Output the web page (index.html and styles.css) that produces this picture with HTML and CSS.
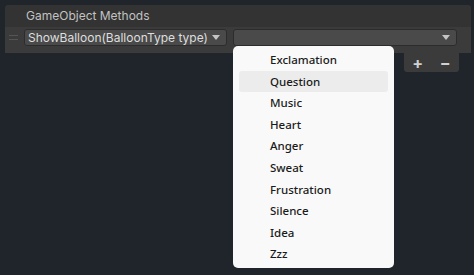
FILE: index.html
```html
<!DOCTYPE html>
<html lang="en">

<head>
    <meta charset="UTF-8" />
    <title>GameObject Methods</title>
    <link rel="stylesheet" href="styles.css">
</head>

<body>
    <div class="panel">
        <div class="panel-header">GameObject Methods</div>
        <div class="panel-row">
            <span class="handle"></span>
            <div class="field field-method">
                <span class="label">ShowBalloon(BalloonType type)</span>
                <span class="arrow"></span>
            </div>
            <div class="field field-value">
                <span class="label"></span>
                <span class="arrow"></span>
            </div>
        </div>
    </div>
    <div class="footer">
        <div class="footer-buttons">
            <span class="btn">+</span>
            <span class="btn">&minus;</span>
        </div>
    </div>

    <ul class="menu">
        <li>Exclamation</li>
        <li class="hover">Question</li>
        <li>Music</li>
        <li>Heart</li>
        <li>Anger</li>
        <li>Sweat</li>
        <li>Frustration</li>
        <li>Silence</li>
        <li>Idea</li>
        <li>Zzz</li>
    </ul>
</body>

</html>
```

FILE: styles.css
```css
html {
    box-sizing: border-box;
    height: 100%;
}

*,
*:before,
*:after {
    box-sizing: inherit;
}

body {
    margin: 0;
    height: 100%;
    background-color: #20242b;
    font-family: Inter, "Noto Sans", sans-serif;
    font-size: 12px;
    position: relative;
}

.panel {
    margin: 5px 3px 0 5px;
}

.panel-header {
    height: 22px;
    line-height: 22px;
    padding-left: 21px;
    background-color: #333333;
    color: #c2c2c2;
    border-radius: 3px 3px 0 0;
}

.panel-row {
    height: 26px;
    background-color: #3b3b3b;
    display: flex;
    align-items: flex-start;
    padding: 2px 14px 0 4px;
    gap: 6px;
}

.handle {
    width: 9px;
    height: 5px;
    margin-top: 6px;
    border-top: 1px solid #555;
    border-bottom: 1px solid #555;
}

.field {
    height: 17px;
    background-color: #4a4a4a;
    border: 1px solid #2c2c2c;
    border-radius: 3px;
    color: #dedede;
    display: flex;
    align-items: center;
    justify-content: space-between;
    padding: 0 6px 0 3px;
    font-size: 12px;
}

.label {
    white-space: nowrap;
    overflow: hidden;
}

.field-method {
    width: 203px;
}

.field-value {
    flex: 1;
}

.arrow {
    flex: none;
    width: 0;
    height: 0;
    border-left: 4px solid transparent;
    border-right: 4px solid transparent;
    border-top: 5px solid #c4c4c4;
}

.footer {
    display: flex;
    justify-content: flex-end;
    padding-right: 15px;
}

.footer-buttons {
    width: 55px;
    height: 19px;
    background-color: #3b3b3b;
    border-radius: 0 0 3px 3px;
    display: flex;
    justify-content: space-around;
    align-items: center;
    color: #d0d0d0;
    font-size: 16px;
    font-weight: bold;
}

.menu {
    position: absolute;
    left: 233px;
    top: 46px;
    width: 161px;
    margin: 0;
    padding: 3px 6px;
    list-style: none;
    background-color: #f9f9f9;
    border-radius: 5px;
    font-family: "Noto Sans", sans-serif;
    font-size: 11.5px;
    font-weight: 500;
    color: #1b1b1b;
}

.menu li {
    height: 21.6px;
    line-height: 22px;
    padding-left: 31px;
    border-radius: 3px;
}

.menu li.hover {
    background-color: #ececec;
}
```
